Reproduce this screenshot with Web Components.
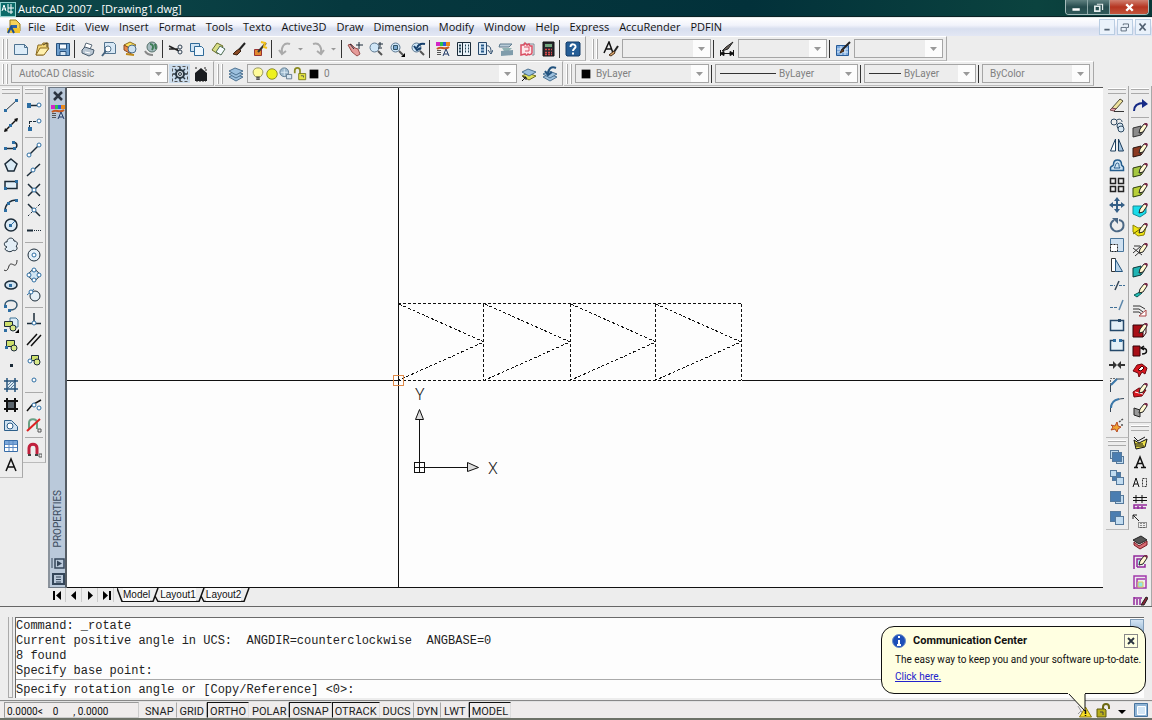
<!DOCTYPE html>
<html lang="en">
<head>
<meta charset="utf-8">
<title>AutoCAD 2007 - [Drawing1.dwg]</title>
<style>
html, body { height: 100%; margin: 0; }
body { font-family: Roboto, "Liberation Sans", sans-serif; font-size: 10px; color: #111; background: #ededed; overflow: hidden; }
</style>
</head>
<body>
<cad-app></cad-app>
<script>
/* Every component shares this: a template cloned into an open shadow root. */
const define = (tag, css, html, setup) => {
  const template = document.createElement('template');
  template.innerHTML = `<style>*{box-sizing:border-box}:host{display:block;box-sizing:border-box}button{font:inherit;color:inherit;background:none;border:0;margin:0;padding:0}${css}</style>${html}`;
  customElements.define(tag, class extends HTMLElement {
    connectedCallback() {
      if (this.shadowRoot) return;
      const content = template.content.cloneNode(true);
      if (setup) setup(this, content);
      this.attachShadow({ mode: 'open' }).append(content);
    }
  });
};

/* ---- icon drawings, 16 by 16 ---- */
const K = '#1b2b38', B = '#2d6ea3', L = '#a9d0ea';
const dot = (x, y) => `<rect x="${x - 1}" y="${y - 1}" width="3" height="3" fill="${B}" stroke="none"/>`;
const ring = (x, y, r = 2) => `<circle cx="${x}" cy="${y}" r="${r}" fill="#fff" stroke="${B}"/>`;
const pencil = `<path d="M7 11l1-4 4-5h2l1 2-4 6z" fill="#fff7d0" stroke="#222"/><path d="M12 2l1-1h2l1 2-1 1z" fill="#7a2a4a" stroke="none"/>`;
const block = (a, b) => `<path d="M1 6l8-2v9l-8 2z" fill="${a}" stroke="${b}"/><path d="M9 13l3-4V6" stroke="${b}" fill="${a}"/>${pencil}`;
const lens = `<circle cx="6.500" cy="6.500" r="4.500" fill="#cfe6f7" stroke="#5d7890"/><path d="M10 10l4 4" stroke="#555" stroke-width="2"/>`;
const sheets = `<path d="M1 8l6-3 8 3-7 4z" fill="#9cc0de" stroke="#4d7291"/>`;
const shade = (x, y, w, f) => `<rect x="${x}" y="${y}" width="${w}" height="${w}" fill="${f}" stroke="#55799c"/>`;
const icons = {
  logo: `<rect width="15" height="14" x=".5" y="1.500" fill="#0b6b68" stroke="#8ed0cc"/><path d="M2 10l2-6 2 6M3 8h3M8 3v8h5M11 3v10M8 7h6" stroke="#fff"/>`,
  doc: `<path d="M4 1h6l4 4v7H4z" fill="#f7d35a" stroke="#9a7b1a"/><path d="M5 6h6v5H5z" fill="#2d62a8" stroke="none"/><path d="M1 9h13v5H1z" fill="#f0c330" stroke="none"/><path d="M2 14l3-6 3 6" stroke="#1b4d91" stroke-width="2"/>`,
  new: `<path d="M1.500 3.500h10l3 3v7h-13z" fill="#dcecf8" stroke="#4e7391"/><path d="M11.500 3.500v3h3" stroke="#4e7391"/>`,
  open: `<path d="M2 14L4 4h4l1-2h5v7l-5 5z" fill="#f3d676" stroke="#8b6b22"/><path d="M2 14l4-7h9l-5 7z" fill="#fff0ad" stroke="#8b6b22"/><path d="M9 4l4-2v4" stroke="#4a3a1a"/>`,
  save: `<path d="M1.500 2.500h13v12h-13z" fill="#6ea0cf" stroke="#28527d"/><path d="M4.500 3h7v5h-7z" fill="#f3f9ff" stroke="#28527d"/><path d="M5 10.500h6v4H5z" fill="#d5e5f2" stroke="#28527d"/>`,
  print: `<path d="M4 7l2-5 6 2-2 4z" fill="#fff" stroke="#5a6a78"/><path d="M2 9l3-3 9 3-1 4-4 2-7-3z" fill="#b9c6d2" stroke="#46596a"/><path d="M5 11l5 1" stroke="#fff"/>`,
  preview: `<path d="M3.500 1.500h9l2 2v9h-11z" fill="#d8e8f5" stroke="#54748f"/><circle cx="7" cy="8" r="3" fill="#fff" stroke="#54748f"/><path d="M5 10l-4 5" stroke="#45637d" stroke-width="2"/>`,
  publish: `<path d="M2 4l6-3 6 3-5 4z" fill="#ffe15a" stroke="#8b6b22"/><path d="M2 4v5l7 4V8z" fill="#e7894a" stroke="#8b4a22"/><circle cx="10" cy="8" r="4" fill="#cfe2f1" stroke="#4a6a88"/><path d="M4 13l8 1" stroke="#c08a1a" stroke-width="2"/>`,
  web: `<circle cx="9" cy="6" r="5" fill="#a7bcc0" stroke="#56716b"/><path d="M7 3c3 0 4 3 2 6M12 3l1 5" stroke="#3d7d55" stroke-width="2"/><path d="M2 10c2 4 5 4 8 4" stroke="#888" stroke-width="2"/>`,
  cut: `<path d="M1 5l10 5M1 8h9" stroke="#222" stroke-width="1.500"/><circle cx="12" cy="6" r="2" stroke="#345"/><circle cx="12" cy="11" r="2" stroke="#345"/>`,
  copy: `<path d="M1.500 2.500h9v8h-9z" fill="#cfe3f3" stroke="#2f6a98"/><path d="M5.500 5.500h7l2 2v7h-9z" fill="#eef7fd" stroke="#2f6a98"/>`,
  paste: `<path d="M2 9l5-7 6 3-5 8z" fill="#d8dd86" stroke="#6a6e2a"/><path d="M6 11l4-6 5 3-4 6z" fill="#f5fbff" stroke="#4b6b50"/>`,
  brush: `<path d="M14 2L8 9" stroke="#222" stroke-width="2"/><path d="M8 8l2 2-4 4-4-1 3-3z" fill="#8a4a25" stroke="#3a2212"/>`,
  blockedit: `<path d="M2.500 8.500h7v6h-7z" fill="#e2882d" stroke="#933"/><path d="M14 2L6 11" stroke="#333" stroke-width="2"/><path d="M9 1l4 1-1 4 3 1" stroke="#f3c21c" stroke-width="2"/>`,
  undo: `<path d="M13 3C7 1 4 6 5 12M2 9l3 4 4-3" stroke="#aaa" stroke-width="2"/>`,
  redo: `<path d="M3 3c6-2 9 3 8 9M7 10l4 3 3-4" stroke="#aaa" stroke-width="2"/>`,
  caret: `<path d="M5 7h5L7.500 9.500z" fill="#999" stroke="none"/>`,
  pan: `<path d="M1 4l3-1 4 4 3 1 2 5-3 2-5-4z" fill="#e69a98" stroke="#98504e"/><path d="M3 3l4 5M12 1v7M9 4h7" stroke="${K}"/>`,
  zoom: `${lens}<path d="M12 1v5M10 3h5M10 7h4" stroke="${K}"/>`,
  zoomwin: `${lens}<path d="M4.500 4.500h4v4h-4z" fill="#7aa8d0" stroke="#356"/><path d="M16 12v4h-4z" fill="#000" stroke="none"/>`,
  zoomprev: `${lens}<path d="M15 3c-5-1-7 1-8 4M4 5l3 4 4-2" stroke="#153e6b" stroke-width="2"/>`,
  props: `<path d="M1 1h4v4H1z" fill="#d426c7" stroke="none"/><path d="M5 1h3v4H5z" fill="#2ac34b" stroke="none"/><path d="M8 1h3v4H8z" fill="#2d5be0" stroke="none"/><path d="M11 1h4v4h-4z" fill="#e98a1c" stroke="none"/><path d="M2 8c4-4 7 2 12-2" stroke="#c55a22" stroke-width="2"/><path d="M2 9.500h4M2 11.500h4M2 13.500h4" stroke="#555"/><path d="M8 15l3-7 3 7M9 13h4" stroke="#223a66"/>`,
  center: `<path d="M1.500 1.500h13v13h-13zM6.500 2v12" fill="#e8f1f8" stroke="${K}"/><path d="M3 4.500h2M3 7.500h2M3 10.500h2M9 4.500h1M12 4.500h1M9 7.500h1M12 7.500h1M9 10.500h1M12 10.500h1" stroke="#245" stroke-width="2"/>`,
  palettes: `<path d="M1.500 1.500h8v12h-8z" fill="#d9e9f6" stroke="#28486a"/><path d="M4 4.500h3M4 7.500h3M4 10.500h3" stroke="#285a8a" stroke-width="2"/><path d="M9 5c4-1 5 2 5 6M11 9l3 4 2-4" stroke="#28486a"/>`,
  sheet: `<path d="M2 3h12l-3 3H1z" fill="#b9ccd8" stroke="#5e7b8e"/><path d="M4 7h10l-3 3H6z" fill="#8fb2b2" stroke="none"/><path d="M3 10l12-1v5l-12 1z" fill="#7f9cab" stroke="none"/>`,
  markup: `<path d="M4 5V3h11v11h-2" stroke="#7d8a96"/><path d="M2 14V4h3l1-2 2 2 2-1 1 2h2v7c-1 2-3 2-4 1-1 2-3 1-3 0z" fill="#fde7ea" stroke="#d94e62" stroke-width="1.500"/><path d="M5 6h5v4H6" stroke="#d94e62"/>`,
  calc: `<path d="M3 1h11v14H3z" fill="#26262c" stroke="#111"/><path d="M5 3h7v3H5z" fill="#72a57c" stroke="none"/><path d="M5 8.500h7M5 11.500h7M5 13.500h7" stroke="#d94a4a" stroke-dasharray="2 1" stroke-width="1.500"/>`,
  help: `<path d="M2 1h12l1 1v12l-1 1H2l-1-1V2z" fill="#245d96" stroke="#143d68"/><path d="M5.500 6c0-4 5.500-3 5 0-.3 1.500-2.500 2-2.500 4M8 11.500v2" stroke="#fff" stroke-width="2"/>`,
  style: `<path d="M1 12L6 1l4 11M3 8h6" stroke="#111" stroke-width="1.500"/><path d="M15 5l-4 6" stroke="#222" stroke-width="2"/><path d="M11 10l1 2-4 3-2-1z" fill="#dca66c" stroke="#4a321b"/>`,
  dimstyle: `<path d="M1.500 9v6M14.500 9v6M1 12.500h14M1 12.500l4-2v4zM15 12.500l-4-2v4z" fill="#111" stroke="#111"/><path d="M14 1L9 8 3 10l4-4z" fill="#6a6058" stroke="#222"/>`,
  tablestyle: `<path d="M1.500 4.500h12v10h-12z" fill="#7aa8dc" stroke="#265b98"/><path d="M2 8h11M2 11h11M6 5v9M10 5v9" stroke="#dcebfa"/><path d="M15 1L7 9" stroke="#222" stroke-width="2"/><path d="M7 8l2 2-4 2z" fill="#7c4324" stroke="#321"/>`,
  gear: `<path d="M.5.500h15v15H.5z" stroke="#555" stroke-dasharray="3 2"/><circle cx="8" cy="8" r="4" fill="#d6dee5" stroke="#2a3742" stroke-width="2"/><path d="M8 1v3M8 12v3M1 8h3M12 8h3M3 3l2 2M11 11l2 2M13 3l-2 2M5 11l-2 2" stroke="#2a3742" stroke-width="1.500"/><circle cx="8" cy="8" r="1.500" stroke="#2a3742"/>`,
  home: `<path d="M2 7l6-5 6 5v8H2z" fill="#1a1d20" stroke="none"/><path d="M11 2h2v4M2 2h3M3 15h10" stroke="#222" stroke-dasharray="2 1"/>`,
  layers: `<g transform="translate(0 3)">${sheets}</g>${sheets}<g transform="translate(0 -3)">${sheets}</g>`,
  layerset: `<g transform="translate(0 2)"><path d="M1 8l6-3 8 3-7 4z" fill="#dfe05a" stroke="#6a6a1c"/></g><g transform="translate(0 -2)">${sheets}</g><path d="M1 15l4-4M2 11h3v3" stroke="#111"/>`,
  layerprev: `<g transform="translate(0 3)">${sheets}</g>${sheets}<path d="M14 2C9 0 6 3 6 8M3 5l3 4 4-3" stroke="#23537e" stroke-width="2"/>`,
  bulb: `<path d="M5 11C0 6 3 1 8 1s8 5 3 10z" fill="#fffb9a" stroke="#8a8a4a"/><path d="M6 12h4M6 14h4" stroke="#555" stroke-width="1.500"/>`,
  sun: `<circle cx="8" cy="8" r="6" fill="#eef11f" stroke="#808022"/>`,
  freeze: `<circle cx="6" cy="6" r="5" fill="#9db8cc" stroke="#587890"/><path d="M2 6h8M6 2v8" stroke="#e1eff8"/><path d="M8.500 8.500h6v5h-6z" fill="#d7e6f1" stroke="#5b7388"/>`,
  lock: `<path d="M2 7V4c0-4 6-4 6 0v5" stroke="#8b8b22" stroke-width="2"/><path d="M6.500 7.500h8v7h-8z" fill="#e5e542" stroke="#777714"/><path d="M9 10h3v2" stroke="#555"/>`,
  black: `<path d="M3 3h10v10H3z" fill="#000" stroke="none"/>`,
  line: `<path d="M2 14L14 3" stroke="${K}"/>${dot(2, 13)}${dot(13, 3)}`,
  xline: `<path d="M2 14L14 2" stroke="#111" stroke-width="1.500"/><path d="M1 15l1-4 3 3zM15 1l-1 4-3-3z" fill="#111" stroke="none"/>${dot(7, 8)}`,
  pline: `<path d="M2 11.500h9c4-1 4-6-1-6.500" stroke="${K}" stroke-width="1.500"/>${dot(2, 11)}${dot(11, 11)}${dot(10, 5)}`,
  polygon: `<path d="M8 2l6 5-3 7H5L2 7z" fill="#d9eaf5" stroke="${K}" stroke-width="1.500"/>`,
  rect: `<path d="M2 4.500h12v7H2z" fill="#e2eff8" stroke="${K}" stroke-width="1.500"/>${dot(2, 11)}${dot(13, 4)}`,
  arc: `<path d="M2 14C2 8 6 3 14 3" stroke="${K}" stroke-width="1.500"/>${dot(2, 13)}${dot(5, 6)}${dot(13, 3)}`,
  circle: `<circle cx="8" cy="8" r="6" fill="#dbeaf5" stroke="${K}" stroke-width="1.500"/><path d="M8 8l4-4" stroke="${B}"/>${dot(7, 8)}`,
  cloud: `<path d="M5 14c-3 0-4-3-1-4C0 9 1 4 4 5c0-5 7-5 7-1 4 0 4 4 2 5 3 3-1 6-3 4-1 2-5 2-5 1z" fill="#e3eef6" stroke="${K}"/>`,
  spline: `<path d="M1 13c3 2 4-1 5-4s3-2 5-1 3-2 3-5" stroke="#333"/>`,
  ellipse: `<ellipse cx="8" cy="8" rx="6" ry="4" fill="#cfe3f1" stroke="${K}" stroke-width="1.500"/>${dot(7, 8)}`,
  earc: `<path d="M2 8c0-6 12-6 12 0 0 3-3 5-7 5" stroke="#35576f" stroke-width="1.500"/>${dot(2, 9)}${dot(6, 13)}`,
  insert: `<path d="M7 1h6l2 2v7H7z" fill="#dcecf8" stroke="#3f7295"/><path d="M1.500 4.500h8v5h-8z" fill="#cddf6c" stroke="${K}"/><circle cx="10" cy="11" r="3" fill="#d8e88a" stroke="${K}"/>${dot(2, 13)}<path d="M16 12v4h-4z" fill="#000" stroke="none"/>`,
  block: `<path d="M3.500 3.500h8v6h-8z" fill="#cddf6c" stroke="${K}"/><circle cx="11" cy="11" r="3" fill="#d8e88a" stroke="${K}"/>${dot(3, 10)}`,
  point: `<path d="M7 7h3v3H7z" fill="${K}" stroke="none"/>`,
  hatch: `<path d="M4 4h8v8H4z" fill="#dceaf4" stroke="none"/><path d="M1 4h14M1 12h14M4 1v14M12 1v14" stroke="#25517a" stroke-width="1.500"/><path d="M5 11l6-6M5 8l3-3M8 11l3-3" stroke="#5a7d99"/>`,
  gradient: `<path d="M4 4h8v8H4z" fill="#5b656d" stroke="none"/><path d="M1 4h14M1 12h14M4 1v14M12 1v14" stroke="#111" stroke-width="2"/>`,
  region: `<path d="M1.500 3.500h7l6 6v4h-13z" fill="#cfe1f0" stroke="#2d5f8a"/><circle cx="7" cy="9" r="3" fill="#fff" stroke="#2d5f8a"/>`,
  table: `<path d="M1.500 3.500h13v11h-13z" fill="#fff" stroke="#376ca8"/><path d="M2 4h12v3H2z" fill="#7ba7da" stroke="none"/><path d="M2 7.500h12M2 10.500h12M6 4v10M10 4v10" stroke="#5c8ac4"/>`,
  text: `<path d="M3 14L8 2l5 12M5 10h6" stroke="#111" stroke-width="1.500"/>`,
  track: `<path d="M2 8.500h9" stroke="${K}" stroke-width="1.500"/><path d="M1 6h4v5H1z" fill="${B}" stroke="none"/>${ring(13, 8)}`,
  from: `<path d="M3 4.500h8M3.500 4v8" stroke="${K}" stroke-dasharray="3 1"/><path d="M2 10h4v4H2z" fill="${B}" stroke="none"/>${ring(13, 4)}`,
  endpoint: `<path d="M3 13L13 3" stroke="${K}" stroke-width="1.500"/>${ring(3, 13)}${ring(13, 3)}`,
  midpoint: `<path d="M1 14L14 2" stroke="${K}" stroke-width="1.500"/>${ring(7, 8)}`,
  intersect: `<path d="M2 2l12 12M14 2L2 14" stroke="${K}" stroke-width="1.500"/>${ring(8, 8)}`,
  apparent: `<path d="M2 2l12 12" stroke="${K}" stroke-width="1.500"/><path d="M14 2L2 14" stroke="${K}" stroke-dasharray="3 2"/>${ring(8, 8)}`,
  extension: `<path d="M1 8.500h6" stroke="${K}" stroke-width="2"/><path d="M8 8.500h8" stroke="${K}" stroke-dasharray="1 1"/>`,
  centre: `<circle cx="8" cy="8" r="6" fill="#e6f0f7" stroke="${K}"/>${ring(8, 8)}`,
  quadrant: `<circle cx="8" cy="8" r="5" fill="#d1e4f1" stroke="${K}"/>${ring(8, 3)}${ring(8, 13)}${ring(3, 8)}${ring(13, 8)}`,
  tangent: `<circle cx="9" cy="9" r="5" fill="#e6f0f7" stroke="${K}"/><path d="M1 8l7-6" stroke="${B}"/>${ring(5, 5)}`,
  perp: `<path d="M8 1v9M1 11.500h14" stroke="${K}" stroke-width="1.500"/>${ring(8, 11)}`,
  parallel: `<path d="M1 13L11 2M5 14L15 3" stroke="#111" stroke-width="1.500"/>`,
  insertion: `<path d="M5.500 3.500h7v5h-7z" fill="#cddf6c" stroke="${K}"/><circle cx="11" cy="10" r="3" fill="#d8e88a" stroke="${K}"/>${ring(4, 9)}`,
  node: `<circle cx="8" cy="8" r="2" fill="#fff" stroke="${B}"/>`,
  nearest: `<path d="M1 14l5-6 9-5" stroke="#111" stroke-width="1.500"/>${ring(8, 8)}${ring(13, 11)}`,
  none: `<path d="M3 12V6c0-5 8-5 8 0v6" stroke="#6aa084" stroke-width="2"/><path d="M1 14L14 2" stroke="#d22" stroke-width="2"/><path d="M12 12h3v3h-3z" stroke="#555"/>`,
  magnet: `<path d="M3 12V6c0-5 8-5 8 0v6" stroke="#c0203c" stroke-width="3"/><path d="M2 13h3M9 13h3" stroke="#444" stroke-width="2"/><path d="M13 12h3v3h-3z" stroke="#555"/>`,
  erase: `<path d="M3 11l8-9 3 2-7 8z" fill="#efe39d" stroke="#4e4a35"/><path d="M3 11l4 1-2 2-4-1z" fill="#e4a0a8" stroke="#7a4a50"/><path d="M5 14.500h10" stroke="#333"/>`,
  copy2: `<circle cx="5" cy="5" r="3" stroke="#2d4860"/><circle cx="11" cy="9" r="3" fill="#d7e7f3" stroke="#2d4860"/><circle cx="12" cy="12" r="3" fill="#d7e7f3" stroke="#2d4860"/><path d="M8 3c3-2 5 0 5 2" stroke="#2d4860"/>`,
  mirror: `<path d="M6.500 2v12h-5z" fill="#fff" stroke="#1b3c5b"/><path d="M9.500 2v12h5z" fill="#a6c6e2" stroke="#1b3c5b"/>`,
  offset: `<path d="M1.500 13.500v-3c1-2 3-1 3-3 0-6 8-6 8 0 0 2 2 1 2 3v3z" fill="#cfe4f4" stroke="#245d8d" stroke-width="1.500"/><path d="M5 11h6c-2-2 0-5-2.500-5S7 9 5 11" stroke="#245d8d"/>`,
  array: `<path d="M1.500 1.500h5v5h-5zM9.500 1.500h5v5h-5zM1.500 9.500h5v5h-5zM9.500 9.500h5v5h-5z" stroke="#222" stroke-width="1.500"/>`,
  move: `<path d="M8 2v12M2 8h12" stroke="#355f86" stroke-width="2"/><path d="M8 0l3 4H5zM8 16l3-4H5zM0 8l4-3v6zM16 8l-4-3v6z" fill="#355f86" stroke="none"/>`,
  rotate: `<path d="M5 3c-7 5-1 13 5 11s6-10 0-11" stroke="#4b6885" stroke-width="2"/><path d="M3 1h6v6z" fill="#4b6885" stroke="none"/>`,
  scale: `<path d="M1.500 1.500h13v13h-13z" fill="#cfe1f1" stroke="#48759b"/><path d="M1.500 7.500h7v7h-7z" fill="#fff" stroke="#222" stroke-dasharray="2 1"/>`,
  stretch: `<path d="M2.500 1.500h4v13h-4z" fill="#fff" stroke="#333"/><path d="M6.500 2.500l7 12h-7z" fill="#b7d2e9" stroke="#24557e"/>`,
  trim: `<path d="M1 8.500h5M10 8.500h6" stroke="#3f6f96" stroke-dasharray="3 1"/><path d="M10 4l-4 9" stroke="#345" stroke-width="1.500"/>`,
  extend: `<path d="M1 10.500h8" stroke="#3f6f96" stroke-dasharray="3 1"/><path d="M14 3l-4 10" stroke="#5c87ab" stroke-width="1.500"/>`,
  breakpt: `<path d="M1.500 3.500h13v10h-13z" fill="#e4f0f8" stroke="#25496a" stroke-width="1.500"/><path d="M9 2h3v3H9z" fill="#25496a" stroke="none"/>`,
  break: `<path d="M5 3.500H1.500v10h13v-10H11" fill="#e4f0f8" stroke="#25496a" stroke-width="1.500"/>${dot(5, 3)}${dot(11, 3)}`,
  join: `<path d="M0 8h5M11 8h5" stroke="#333" stroke-width="2"/><path d="M8 8L4 4v8zM8 8l4-4v8z" fill="#333" stroke="none"/>`,
  chamfer: `<path d="M1.500 15V8l6-6H15" stroke="#345"/><path d="M1.500 8V1.500h6" stroke="#666" stroke-dasharray="2 1"/><path d="M2 8l6-6" stroke="#3b78aa" stroke-width="2"/>`,
  fillet: `<path d="M1.500 15v-4C2 5 6 2 15 1.500" stroke="#345"/><path d="M2 11c0-5 3-8 8-9" stroke="#3b78aa" stroke-width="2"/>`,
  explode: `<path d="M2 8l4 1 2-4 1 4 3 1-3 2-1 3-2-3-4 1 2-3z" fill="#f0a432" stroke="#b84b24"/><path d="M10 5l4-3M12 8h3" stroke="#555" stroke-width="1.500" stroke-dasharray="2 1"/>`,
  front: shade(1.5, 1.5, 8, '#c2dcf0') + shade(7.5, 7.5, 7, '#c2dcf0') + shade(3.5, 3.5, 9, '#4a7db1'),
  back: shade(3.5, 3.5, 8, '#4a7db1') + shade(1.5, 1.5, 6, '#c2dcf0') + shade(7.5, 8.5, 7, '#c2dcf0'),
  above: shade(6.5, 6.5, 8, '#c2dcf0') + shade(1.5, 2.5, 10, '#4a7db1'),
  under: shade(1.5, 2.5, 10, '#4a7db1') + shade(6.5, 7.5, 8, '#c2dcf0'),
  forward: `<path d="M2 14C2 8 6 6 12 6" stroke="#152a86" stroke-width="2"/><path d="M10 2l6 5-6 4z" fill="#152a86" stroke="none"/>`,
  e1: block('#8b8b8b', '#333'), e2: block('#8c3a22', '#2a1510'), e3: block('#a5c840', '#2d3a10'), e4: block('#b8d038', '#30420e'),
  e5: `<path d="M1 4h13v7l-6 4-7-3z" fill="#18dcea" stroke="#178a94"/>${pencil}`,
  e6: `<path d="M1 3l5 3 8-1-2 8-6 1-5-4z" fill="#f1e512" stroke="#8a8208"/><path d="M1 12l10-7" stroke="#665f00"/>${pencil}`,
  e7: `<path d="M1 6l9 7M1 11l8-7M3 14l8-7M2 4h6" stroke="#333"/>${pencil}`,
  e8: block('#20b4b4', '#0b3a3a'),
  e9: `<path d="M2 13l6-3 2 1-5 4z" fill="#20c0b8" stroke="#0b5a55"/>${pencil}`,
  e10: `<path d="M1 4h7l5 3M1 7h6l4 3M1 10h6l4 3h3" stroke="#333"/><path d="M7 14l7-6v6z" fill="#fff" stroke="#a44"/>`,
  e11: `<path d="M1 3h10v12H1z" fill="#a80e16" stroke="#330308"/><path d="M11 15l3-4V2" stroke="#330308"/>${pencil}`,
  e12: `<path d="M1 4h7v10H1z" fill="#a80e16" stroke="#330308"/><path d="M10 12c6 0 6-6 0-6M12 4l-3 2 3 2" stroke="#111" stroke-width="1.500"/>`,
  e13: `<path d="M1 9l4-6 5-1 5 4-2 6-3-2-3 5-1-4z" fill="#d8161f" stroke="#6a0a10"/><path d="M6 8l4-4 2 2-3 3z" fill="#fff" stroke="#400"/>`,
  e14: `<path d="M1 10l6-4 7 2-4 6-8 1z" fill="#d8161f" stroke="#6a0a10"/><path d="M3 10l8 2" stroke="#fff"/>${pencil}`,
  e15: `<path d="M2 6l6 2v7l-6-2z" fill="#9a9a9a" stroke="#222"/>${pencil}`,
  f1: `<path d="M2 6l5 3 8-4-2 8-9 2z" fill="#eee24a" stroke="#111"/><path d="M2 3l4 4 7-4M3 10h8M4 12h8" stroke="#111"/>`,
  f2: `<path d="M2 13.500h4M9 13.500h5M4 13L8 3l4 10M5 9.500h5" stroke="#111" stroke-width="1.500"/>`,
  f3: `<path d="M1 13l3-9 3 9M2 10h4" stroke="#111"/><path d="M10.500 4.500h4v8h-4z" stroke="#333" stroke-dasharray="2 1"/>`,
  f4: `<path d="M1 3.500h14M1 6.500h14M4 1v8M10 1v8" stroke="#111"/><path d="M2 15v-4h13M6 15v-3M10 15v-3M2 14h12" stroke="#92289c" stroke-width="1.500"/>`,
  f5: `<path d="M1 1l6 6M1 5V1h4" stroke="#222"/><path d="M6.500 8.500h8v5h-8zM9 9v5M12 9v5" stroke="#333" stroke-dasharray="1 1"/>`,
  f6: `<path d="M1 6l8-4 6 4-8 4z" fill="#555" stroke="#222"/><path d="M2 8l5 4 8-5v4l-7 4-6-4z" fill="#d86a72" stroke="#7a1a22"/>`,
  f7: `<path d="M2 15V2h12M5 13h8v-3M5 13V5h5" stroke="#92289c" stroke-width="1.500"/><path d="M6 6h5v5H6z" fill="#b4eef0" stroke="none"/>${pencil}`,
  f8: `<path d="M2 15V2h12v12H2M5 13V5h8" stroke="#a23aac" stroke-width="1.500"/><path d="M6 8h5v5H6z" fill="#8fe6e4" stroke="#dcc95a"/>`,
  f9: `<path d="M2 3v8M2 4h8M5 5v6M8 5v6" stroke="#92289c" stroke-width="1.500"/><path d="M9 11l5-8 2 1-4 7z" fill="#8b2236" stroke="#222"/>`,
  min: `<path d="M3 9h9v3H3z" fill="#fff" stroke="none"/>`,
  max: `<path d="M3.500 6.500h6v6h-6z" stroke="#e6eeee" stroke-width="2"/><path d="M6 4h7v7" stroke="#e6eeee" stroke-width="1.500"/>`,
  close: `<path d="M4 4l8 8M12 4l-8 8" stroke="#fff" stroke-width="3"/>`,
  mdimin: `<path d="M5 11h6" stroke="#516071" stroke-width="2"/>`,
  mdimax: `<path d="M3.500 8.500h6v4h-6zM6 6V4.500h6v4h-2" stroke="#516071"/>`,
  mdiclose: `<path d="M4 4l7 8M11 4l-7 8" stroke="#516071" stroke-width="2"/>`,
  xsmall: `<path d="M4 4l8 8M12 4l-8 8" stroke="#2b3441" stroke-width="2.500"/>`,
  autohide: `<path d="M2 3v10" stroke="#34465a"/><path d="M5 4h9v9H5z" stroke="#34465a" stroke-width="1.500"/><path d="M7 5.500v6l5-3z" fill="#34465a" stroke="none"/>`,
  menu: `<path d="M3 3h11v10H3z" stroke="#34465a" stroke-width="2"/><path d="M6 6h5M6 8.500h5M6 11h5" stroke="#34465a"/>`,
  first: `<path d="M4 4v9" stroke="#000" stroke-width="2"/><path d="M11 4v9L6 8.500z" fill="#000" stroke="none"/>`,
  prev: `<path d="M10 4v9L5 8.500z" fill="#000" stroke="none"/>`,
  next: `<path d="M6 4v9l5-4.500z" fill="#000" stroke="none"/>`,
  last: `<path d="M12 4v9" stroke="#000" stroke-width="2"/><path d="M5 4v9l5-4.500z" fill="#000" stroke="none"/>`,
  info: `<circle cx="8" cy="8" r="6.500" fill="#1d4fb8" stroke="#6d8fc9"/><path d="M8 3v2M8 7v5M6 12h4" stroke="#fff" stroke-width="2"/>`,
  warn: `<path d="M2 4l5 8M2 12l3-3" stroke="#999"/><path d="M9.500 5l6 10h-12z" fill="#f7de24" stroke="#8a7a10"/><path d="M9.500 8v4M9.500 13v1" stroke="#111" stroke-width="1.500"/>`,
  unlock: `<path d="M8 8V5c0-4 6-4 6 0v2" stroke="#6d6a14" stroke-width="2"/><path d="M2 7h8l1 1v7H2z" fill="#b8ae1c" stroke="#5d590e"/><path d="M5 10h3v3" stroke="#444"/>`,
  down: `<path d="M4 8h8l-4 4z" fill="#000" stroke="none"/>`,
  clean: `<path d="M1.500 1.500h13v13h-13z" fill="#8fb4d6" stroke="#48749e"/><path d="M4.500 4.500h8v8h-8z" fill="#d3e6f6" stroke="#fff"/>`
};

define('cad-icon', ':host{width:16px;height:16px;flex:none}svg{display:block;width:100%;height:100%}', '<svg viewBox="0 0 16 16" fill="none" aria-hidden="true"></svg>',
  (host, root) => { root.querySelector('svg').innerHTML = icons[host.getAttribute('name')] || ''; });

define('cad-tool', `
  :host{flex:none;width:21px;height:19px}
  :host([narrow]){width:12px}
  :host([small]){width:16px;height:16px}
  :host([on]) button{background:#cbdcec}
  button{display:grid;place-items:center;place-content:center;width:100%;height:100%;overflow:hidden}`,
  '<button type="button"><cad-icon></cad-icon></button>',
  (host, root) => {
    root.querySelector('cad-icon').setAttribute('name', host.getAttribute('name'));
    root.querySelector('button').setAttribute('aria-label', host.getAttribute('label') || host.getAttribute('name'));
  });

define('cad-sep', ':host{flex:none;width:4px;height:18px;border-left:1px solid transparent;border-right:2px solid transparent;background:#333;background-clip:padding-box}:host([flat]){width:18px;height:1px;border:0;background:#aaa}', '');

/* Toolbars: a grip of two raised bars, then the slotted tools. */
define('cad-toolbar', `
  :host{display:flex;flex:none;align-items:center;padding-right:2px;border-right:1px solid #a8a8a8;border-bottom:1px solid #bbb;border-top:1px solid #fff;height:25px}
  .grip{flex:none;width:5px;height:20px;margin:0 2px 0 3px;border-left:1px solid #aaa;border-right:1px solid #aaa;box-shadow:-1px 0 #fff,inset -1px 0 #fff}
  :host([column]){flex-direction:column;gap:4px;height:auto;width:23px;padding:0 0 4px;border-top:0}
  :host([column]) .grip{width:18px;height:5px;margin:3px 0 -1px;border:0;border-top:1px solid #aaa;border-bottom:1px solid #aaa;box-shadow:0 -1px #fff}`,
  '<div class="grip"></div><slot></slot>');

define('cad-combo', `
  :host{display:flex;align-items:center;flex:none;height:19px;margin:0 1px;border:1px solid #a5a5a5;background:#ededed}
  select{flex:1;min-width:0;height:100%;border:0;margin:0;padding:0 18px 0 3px;appearance:none;border-radius:0;opacity:1;font:inherit;font-size:10px;color:#808080;
    background:url("data:image/svg+xml,%3Csvg xmlns='http://www.w3.org/2000/svg' width='17' height='17'%3E%3Crect width='17' height='17' fill='%23fcfcfc'/%3E%3Cpath d='M5 7h7l-3.500 4z' fill='%23999'/%3E%3C/svg%3E") right center no-repeat}
  :host([plain]) select{padding-left:7px}`,
  '<slot></slot><select disabled><option></option></select>',
  (host, root) => {
    root.querySelector('select').setAttribute('aria-label', host.getAttribute('label'));
    root.querySelector('option').textContent = host.getAttribute('value') || '';
  });

define('cad-title', `
  :host{display:flex;flex:none;align-items:center;height:18px;padding:0 3px 0 0;color:#fff;background:linear-gradient(90deg,#0e4a4b,#06383e 30%,#02313a 65%,#0b433f 90%,#0a3838);border-bottom:1px solid #e9eeee;box-shadow:inset 0 -1px #0a2224}
  h1{flex:1;margin:0 0 0 2px;font:11px/16px "Open Sans",sans-serif;white-space:nowrap}
  .win{display:flex;align-self:flex-start;height:15px;border:1px solid #a5bcbc;border-top:0;border-radius:0 0 4px 4px;overflow:hidden}
  button{display:grid;place-items:center;width:22px;height:14px;background:linear-gradient(#5f8080,#264c4e 50%,#315a5a);border-right:1px solid #8da8a8}
  button:last-child{width:38px;border:0;background:linear-gradient(#d08070,#b53521 50%,#c4553c)}
  .win cad-icon{width:13px;height:13px}`,
  `<cad-icon name="logo"></cad-icon><h1>AutoCAD 2007 - [Drawing1.dwg]</h1>
  <div class="win"><button aria-label="Minimize"><cad-icon name="min"></cad-icon></button><button aria-label="Restore"><cad-icon name="max"></cad-icon></button><button aria-label="Close"><cad-icon name="close"></cad-icon></button></div>`);

define('cad-menubar', `
  :host{display:flex;flex:none;height:18px;align-items:center;padding:0 1px 0 6px;background:linear-gradient(#fff,#f1f3fb 40%,#d8dfef 60%,#e3e7f4)}
  nav{display:flex;flex:1;gap:10px;margin-left:6px}
  nav button{font:11px/16px "Open Sans",sans-serif;white-space:nowrap}
  .mdi{display:flex;gap:2px}
  .mdi button{display:grid;place-items:center;width:16px;height:16px;border:1px solid #b9cde2;background:#eaf2fb}
  .mdi cad-icon{width:14px;height:14px}`,
  `<cad-icon name="doc"></cad-icon><nav></nav>
  <div class="mdi"><button aria-label="Minimize drawing"><cad-icon name="mdimin"></cad-icon></button><button aria-label="Restore drawing"><cad-icon name="mdimax"></cad-icon></button><button aria-label="Close drawing"><cad-icon name="mdiclose"></cad-icon></button></div>`,
  (host, root) => {
    root.querySelector('nav').innerHTML = 'File,Edit,View,Insert,Format,Tools,Texto,Active3D,Draw,Dimension,Modify,Window,Help,Express,AccuRender,PDFIN'
      .split(',').map(t => `<button type="button">${t}</button>`).join('');
  });

define('cad-palette', `
  :host{display:flex;flex-direction:column;align-items:center;flex:none;width:19px;background:#bac9da;border:1px solid #6e7884;border-left:2px solid #8b939c;border-right:2px solid #555c63}
  h2{margin:auto 0 8px;font:10px/16px Roboto,sans-serif;color:#3c4c5e;writing-mode:vertical-rl;transform:rotate(180deg)}`,
  `<cad-tool small name="xsmall" label="Close palette"></cad-tool><cad-tool small name="props" label="Properties"></cad-tool><h2>PROPERTIES</h2><cad-tool small name="autohide" label="Auto-hide"></cad-tool><cad-tool small name="menu" label="Palette menu"></cad-tool>`);

/* Model space: crosshair, selected shapes and the UCS mark. */
define('cad-canvas', `
  :host{flex:1;min-width:0;background:#fdfdfd;border-top:1px solid #555;border-bottom:1px solid #111}
  svg{display:block;width:100%;height:100%}
  text{font:16px Roboto,sans-serif;font-weight:300;fill:#222}`,
  `<svg role="img" aria-label="Drawing area" fill="none" stroke="#111" shape-rendering="crispEdges">
    <path d="M331.500 0v2000M0 292.500h331M675 292.500h4000"/>
    <g stroke-dasharray="3 2"><path d="M331 215.500h344M331 292.500h344M416.500 216v76M503.500 216v76M588.500 216v76M674.500 216v76"/></g>
    <g stroke-dasharray="3 2"><path d="M332 216l85 38-85 38M418 216l85 38-85 38M504 216l85 38-85 38M589 216l85 38-85 38"/></g>
    <path d="M326.500 287.500h10v10h-10z" stroke="#e08a48"/>
    <path d="M347.500 374.500h10v10h-10zM352.500 330v54M348 379.500h53"/>
    <g shape-rendering="auto"><path d="M352.500 321.500l4 10h-8zM411.500 379.500l-11 4v-9z" fill="#ddd"/><g stroke="none"><text x="348" y="312">Y</text><text x="421" y="386">X</text></g></g>
  </svg>`);

define('cad-tabs', `
  :host{display:flex;flex:none;height:14px}
  cad-tool{width:16px;height:14px;border-right:1px solid #ccc}
  .tabs{display:flex;margin-left:3px;font:10px/12px "Liberation Sans",sans-serif}
  .nav{display:flex;margin-left:2px}
  .tabs button{height:14px;border-bottom:1px solid #111;background:#fafafa}
  svg{display:block;width:10px;height:14px;fill:none;stroke:#111}
  svg.start{width:6px}`,
  `<div class="nav"><cad-tool name="first" label="First tab"></cad-tool><cad-tool name="prev" label="Previous tab"></cad-tool><cad-tool name="next" label="Next tab"></cad-tool><cad-tool name="last" label="Last tab"></cad-tool></div>
  <div class="tabs"><svg class="start" aria-hidden="true"><path d="M0 0l5 13.500h5" stroke-width="1.500"/></svg><button type="button">Model</button>
  <svg aria-hidden="true"><path d="M0 13.500h3L8 0M5 8l3 5.500h2" stroke-width="1.500"/></svg><button type="button">Layout1</button>
  <svg aria-hidden="true"><path d="M0 13.500h3L8 0M5 8l3 5.500h2" stroke-width="1.500"/></svg><button type="button">Layout2</button>
  <svg aria-hidden="true"><path d="M0 13.500h3L8 0" stroke-width="1.500"/></svg></div>`);

define('cad-command', `
  :host{display:flex;flex:none;padding:10px 8px 2px;border-top:1px solid #666;border-bottom:1px solid #888}
  .grip{width:5px;border:1px solid #aaa;border-top:0;margin-right:2px}
  .box{flex:1;border:1px solid #6a6a6a;border-right:0;border-bottom:0;background:#fdfdfd;font:12px/15px "Liberation Mono",monospace;color:#222}
  .log{display:flex;height:61px}
  pre{flex:1;margin:0;padding-top:1px;font:inherit}
  .bar{width:14px;height:16px;border:1px solid #7f9cb8;background:linear-gradient(#d4e4f2,#8fb2d2);margin-top:1px}
  .prompt{display:flex;border-top:1px solid #aaa;height:19px;line-height:20px;white-space:pre}
  input{flex:1;min-width:0;border:0;padding:0;background:none;font:inherit;outline:0}`,
  `<div class="grip"></div><div class="box"><div class="log"><pre>Command: _rotate
Current positive angle in UCS:  ANGDIR=counterclockwise  ANGBASE=0
8 found
Specify base point:</pre><button class="bar" aria-label="Scroll up"></button></div><div class="prompt"><label for="cmd">Specify rotation angle or [Copy/Reference] &lt;0&gt;:</label><input id="cmd"></div></div>`);

define('cad-status', `
  :host{display:flex;flex:none;align-items:center;height:19px;padding:0 2px 0 4px;background:#efecec;border-top:1px solid #e2e2e2;border-bottom:2px solid #6d7268}
  output{display:flex;align-items:center;width:135px;height:16px;padding:2px 0 0 2px;border:1px solid #999;border-right-color:#ccc;border-bottom-color:#ccc;margin-right:3px;white-space:pre}
  .toggles{display:flex;flex:1}
  .toggles button{height:16px;padding:2px 2px 0;font:11px/13px Roboto,sans-serif;color:#222;border:1px solid transparent;border-right-color:#aaa}
  .toggles button[aria-pressed="true"]{border:1px solid #111;border-right-color:#ddd;border-bottom-color:#ddd}
  .tray{display:flex;align-items:center}
  .tray cad-tool{width:19px;height:16px}`,
  `<output>0.0000&lt;    0      , 0.0000</output><div class="toggles"></div>
  <div class="tray"><cad-tool name="warn" label="Communication Center"></cad-tool><cad-tool name="unlock" label="Toolbar lock"></cad-tool><cad-tool name="down" label="Status menu"></cad-tool><cad-tool name="clean" label="Clean screen"></cad-tool></div>`,
  (host, root) => {
    const on = ['ORTHO', 'OSNAP', 'OTRACK', 'MODEL'];
    root.querySelector('.toggles').innerHTML = 'SNAP,GRID,ORTHO,POLAR,OSNAP,OTRACK,DUCS,DYN,LWT,MODEL'.split(',')
      .map(t => `<button type="button" aria-pressed="${on.includes(t)}">${t}</button>`).join('');
  });

define('cad-balloon', `
  :host{position:absolute;right:6px;bottom:26px;width:265px;padding:6px 7px 9px 9px;border:1px solid #111;border-radius:13px;background:#ffffe1}
  header{display:flex;align-items:center;gap:6px;height:15px}
  h2{flex:1;margin:0;font:bold 11px/15px Roboto,sans-serif;color:#111}
  header button{display:grid;place-items:center;width:14px;height:14px;border:1px solid #888}
  header button cad-icon{width:12px;height:12px}
  p,a{display:block;margin:4px 0 0 4px;font:10px/16px Roboto,sans-serif;white-space:nowrap}
  a{width:max-content;margin-top:2px;line-height:14px;color:#2222cc}
  .tail{position:absolute;left:184px;top:100%;width:20px;height:22px}`,
  `<header><cad-icon name="info"></cad-icon><h2>Communication Center</h2><button aria-label="Dismiss"><cad-icon name="xsmall"></cad-icon></button></header>
  <p>The easy way to keep you and your software up-to-date.</p><a href="#center">Click here.</a>
  <svg class="tail" aria-hidden="true"><path d="M2 0l17 18V0" fill="#ffffe1" stroke="#111"/><path d="M2 0h17" stroke="#ffffe1" stroke-width="2"/></svg>`);

const tools = s => s.split(' ').map(n => n === '|' ? '<cad-sep></cad-sep>' : n === 'caret' ? '<cad-tool narrow name="caret" label="History"></cad-tool>' : `<cad-tool name="${n}"></cad-tool>`).join('');
const column = s => `<cad-toolbar column>${s.split(' ').map(n => n === '|' ? '<cad-sep flat></cad-sep>' : `<cad-tool small name="${n}"></cad-tool>`).join('')}</cad-toolbar>`;

define('cad-app', `
  :host{position:relative;display:flex;flex-direction:column;height:100vh;min-width:0;overflow:hidden;background:#ededed}
  .row{display:flex;flex:none;gap:1px;height:25px}
  .row.std{gap:4px}
  .work{display:flex;flex:1;min-height:0;overflow:hidden}
  .centre{display:flex;flex:1;flex-direction:column;min-width:0;padding:1px 3px 4px 2px}
  .view{display:flex;flex:1;min-height:0}
  .side{display:flex;flex-direction:column;flex:none}
  .w89{width:89px}.w157{width:157px}.w270{width:270px}.w134{width:134px}.w143{width:143px}.w112{width:112px}.w108{width:108px}
  cad-combo cad-icon{width:14px;height:14px}
  .layers cad-icon:first-child,.swatch cad-icon{margin-left:3px}
  .rule{height:1px;background:#333;width:32px;margin-left:4px}
  .rule.long{width:56px}`,
  `<cad-title></cad-title><cad-menubar></cad-menubar>
  <div class="row std">
    <cad-toolbar>${tools('new open save | print preview publish web | cut copy paste brush blockedit | undo caret redo caret | pan zoom zoomwin zoomprev | props center palettes sheet markup calc | help')}</cad-toolbar>
    <cad-toolbar>${tools('style')}<cad-combo class="w89" label="Text style"></cad-combo>${tools('| dimstyle')}<cad-combo class="w89" label="Dimension style"></cad-combo>${tools('| tablestyle')}<cad-combo class="w89" label="Table style"></cad-combo></cad-toolbar>
  </div>
  <div class="row">
    <cad-toolbar><cad-combo plain class="w157" label="Workspace" value="AutoCAD Classic"></cad-combo><cad-tool on name="gear"></cad-tool><cad-tool name="home"></cad-tool></cad-toolbar>
    <cad-toolbar><cad-tool name="layers"></cad-tool><cad-combo class="w270 layers" label="Layer" value="0"><cad-icon name="bulb"></cad-icon><cad-icon name="sun"></cad-icon><cad-icon name="freeze"></cad-icon><cad-icon name="lock"></cad-icon><cad-icon name="black"></cad-icon></cad-combo><cad-tool name="layerset"></cad-tool><cad-tool name="layerprev"></cad-tool></cad-toolbar>
    <cad-toolbar><cad-combo class="w134 swatch" label="Colour" value="ByLayer"><cad-icon name="black"></cad-icon></cad-combo><cad-sep></cad-sep><cad-combo class="w143" label="Linetype" value="ByLayer"><span class="rule long"></span></cad-combo><cad-sep></cad-sep><cad-combo class="w112" label="Lineweight" value="ByLayer"><span class="rule"></span></cad-combo><cad-sep></cad-sep><cad-combo plain class="w108" label="Plot style" value="ByColor"></cad-combo></cad-toolbar>
  </div>
  <div class="work">
    <div class="side">${column('line xline pline polygon rect arc circle cloud spline ellipse earc insert block point hatch gradient region table text')}</div>
    <div class="side">${column('track from | endpoint midpoint intersect apparent extension | centre quadrant tangent | perp parallel insertion node | nearest none | magnet')}</div>
    <div class="centre"><div class="view"><cad-palette></cad-palette><cad-canvas></cad-canvas></div><cad-tabs></cad-tabs></div>
    <div class="side">${column('erase copy2 mirror offset array move rotate scale stretch trim extend breakpt break join chamfer fillet explode')}${column('front back above under')}</div>
    <div class="side">${column('forward | e1 e2 e3 e4 e5 e6 e7 e8 e9 e10 e11 e12 e13 e14 e15')}${column('f1 f2 f3 f4 f5 f6 f7 f8 f9')}</div>
  </div>
  <cad-command></cad-command><cad-status></cad-status><cad-balloon></cad-balloon>`);
</script>
</body>
</html>
